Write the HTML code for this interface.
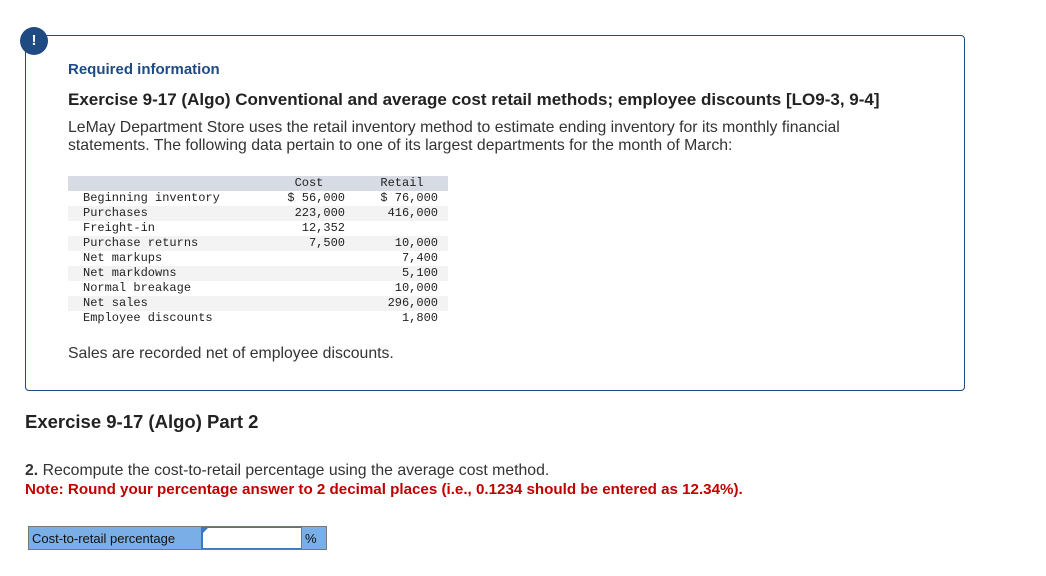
<!DOCTYPE html>
<html><head><style>
body{margin:0;width:1046px;height:576px;background:#fff;font-family:"Liberation Sans",Arial,sans-serif;position:relative;overflow:hidden}
.box{position:absolute;left:25px;top:35px;width:938px;height:354px;border:1px solid #1f4b82;border-radius:4px}
.icon{position:absolute;left:20px;top:27px;width:28px;height:28px;border-radius:50%;background:#1f4b82;color:#fff;font-weight:bold;font-size:15px;text-align:center;line-height:28px}
.t{position:absolute;white-space:nowrap}
table{position:absolute;left:68px;top:176px;border-collapse:collapse;table-layout:fixed;width:380px;font-family:"Liberation Mono",monospace;font-size:12px;color:#222}
td{height:15px;padding:0;line-height:15px;background:#fff}
tr:nth-child(odd) td{background:#f3f3f3}
tr.h td{background:#d6dbe4}
td.l{width:197px;padding-left:15px}
td.c{width:65px;text-align:right}
td.r{width:93px;text-align:right;padding-right:10px}
tr.h td.c{text-align:right;padding-right:0}
</style></head><body>
<div class="box"></div>
<div class="icon">!</div>
<div class="t" style="left:68px;top:61px;font-size:15px;font-weight:bold;color:#1f4b82">Required information</div>
<div class="t" style="left:68px;top:90px;font-size:17px;font-weight:bold;color:#222">Exercise 9-17 (Algo) Conventional and average cost retail methods; employee discounts [LO9-3, 9-4]</div>
<div class="t" style="left:68px;top:119px;font-size:15.8px;color:#333;line-height:18px">LeMay Department Store uses the retail inventory method to estimate ending inventory for its monthly financial<br>statements. The following data pertain to one of its largest departments for the month of March:</div>
<table>
<tr class="h"><td class="l"></td><td class="c">Cost&nbsp;&nbsp;&nbsp;</td><td class="r">Retail&nbsp;&nbsp;</td></tr>
<tr><td class="l">Beginning inventory</td><td class="c">$ 56,000</td><td class="r">$ 76,000</td></tr>
<tr><td class="l">Purchases</td><td class="c">223,000</td><td class="r">416,000</td></tr>
<tr><td class="l">Freight-in</td><td class="c">12,352</td><td class="r"></td></tr>
<tr><td class="l">Purchase returns</td><td class="c">7,500</td><td class="r">10,000</td></tr>
<tr><td class="l">Net markups</td><td class="c"></td><td class="r">7,400</td></tr>
<tr><td class="l">Net markdowns</td><td class="c"></td><td class="r">5,100</td></tr>
<tr><td class="l">Normal breakage</td><td class="c"></td><td class="r">10,000</td></tr>
<tr><td class="l">Net sales</td><td class="c"></td><td class="r">296,000</td></tr>
<tr><td class="l">Employee discounts</td><td class="c"></td><td class="r">1,800</td></tr>
</table>
<div class="t" style="left:68px;top:345px;font-size:15.8px;color:#333">Sales are recorded net of employee discounts.</div>
<div class="t" style="left:25px;top:411px;font-size:18.5px;font-weight:bold;color:#222">Exercise 9-17 (Algo) Part 2</div>
<div class="t" style="left:25px;top:462px;font-size:15.8px;color:#333"><b>2.</b> Recompute the cost-to-retail percentage using the average cost method.</div>
<div class="t" style="left:25px;top:481px;font-size:15.15px;font-weight:bold;color:#c00000">Note: Round your percentage answer to 2 decimal places (i.e., 0.1234 should be entered as 12.34%).</div>
<div style="position:absolute;left:28px;top:526px;width:297px;height:22px;border:1px solid #777;background:#7aaee6"></div>
<div class="t" style="left:32px;top:531px;font-size:13px;color:#111">Cost-to-retail percentage</div>
<div style="position:absolute;left:201px;top:527px;width:98px;height:20px;border:1px solid #3b78c4;border-left:2px solid #3b78c4;background:#fff"></div>
<div style="position:absolute;left:203px;top:528px;width:0;height:0;border-top:5px solid #3b78c4;border-right:5px solid transparent"></div>
<div style="position:absolute;left:301px;top:527px;width:1px;height:22px;background:#777"></div>
<div class="t" style="left:305px;top:531px;font-size:13px;color:#111">%</div>
</body></html>
